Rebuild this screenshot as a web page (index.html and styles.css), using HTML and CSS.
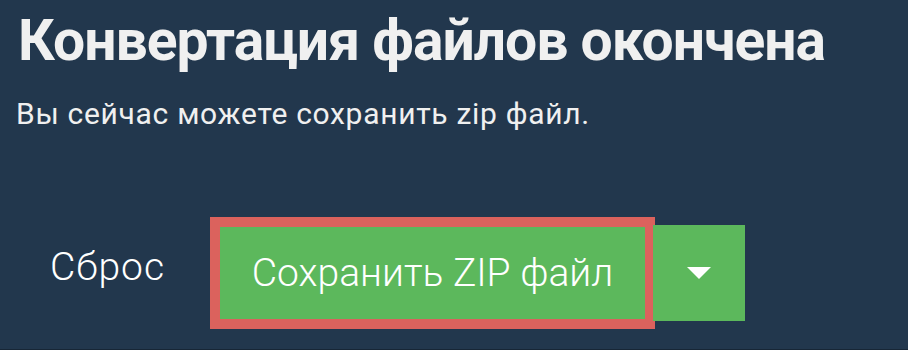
FILE: index.html
```html
<!DOCTYPE html>
<html lang="ru">
<head>
    <meta charset="UTF-8">
    <meta name="viewport" content="width=device-width, initial-scale=1.0">
    <title>Конвертация файлов окончена</title>
    <link rel="stylesheet" href="styles.css">
</head>
<body>
    <div class="wrap">
        <h1 class="title">Конвертация файлов окончена</h1>
        <p class="msg">Вы сейчас можете сохранить zip файл.</p>
        <div class="actions">
            <a class="reset" href="#">Сброс</a>
            <button class="save">Сохранить ZIP файл</button>
            <button class="more"><span class="caret"></span></button>
        </div>
    </div>
</body>
</html>
```

FILE: styles.css
```css
* {
    padding: 0;
    margin: 0;
    box-sizing: border-box;
}
html, body {
    height: 100%;
}
body {
    background-color: #22374d;
    color: #f0f0f0;
    font-family: Roboto, "Liberation Sans", sans-serif;
}
.wrap {
    height: 100%;
    padding: 7px 16px 0;
    border-bottom: 1px solid #172636;
}
.title {
    font-size: 57px;
    line-height: 68px;
    font-weight: 700;
    letter-spacing: -1px;
    padding-left: 2px;
}
.msg {
    margin-top: 21px;
    font-size: 30px;
    line-height: 36px;
    font-weight: 400;
    letter-spacing: 0.7px;
}
.actions {
    display: flex;
    align-items: center;
    margin-top: 93px;
}
.reset {
    color: #ffffff;
    text-decoration: none;
    font-size: 39px;
    font-weight: 300;
    letter-spacing: 1px;
    padding: 0 0 13px 34px;
    width: 202px;
}
.save {
    width: 429px;
    height: 96px;
    background-color: #5cb85c;
    border: 2px solid #db625d;
    box-shadow: 0 0 0 8px #db625d;
    color: #ffffff;
    font-family: Roboto, "Liberation Sans", sans-serif;
    font-size: 39px;
    font-weight: 300;
}
.more {
    width: 92px;
    height: 96px;
    margin-left: 6px;
    background-color: #5cb85c;
    border: none;
    display: flex;
    align-items: center;
    justify-content: center;
}
.caret {
    width: 0;
    height: 0;
    border-left: 12px solid transparent;
    border-right: 12px solid transparent;
    border-top: 12px solid #ffffff;
}
```
